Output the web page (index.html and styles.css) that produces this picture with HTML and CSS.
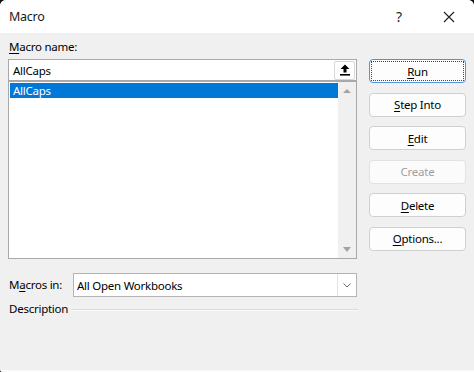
FILE: index.html
```html
<!DOCTYPE html>
<html lang="en">
<head>
    <meta charset="UTF-8">
    <title>Macro</title>
    <link rel="stylesheet" href="styles.css">
</head>
<body>
    <div class="window">
        <div class="titlebar">
            <span class="title">Macro</span>
            <span class="help">?</span>
            <span class="close">
                <svg width="12" height="12" viewBox="0 0 12 12"><path d="M1 1L11 11M11 1L1 11" stroke="#1f1f1f" stroke-width="1.1" fill="none"/></svg>
            </span>
        </div>

        <div class="content">
            <div class="top">
                <div class="left">
                    <div class="label"><u>M</u>acro name:</div>
                    <div class="namebox">
                        <span class="name-text">AllCaps</span>
                        <span class="upload">
                            <svg width="10" height="12" viewBox="0 0 10 12"><path d="M5 0.5L9.5 5H6.5V8.5H3.5V5H0.5Z" fill="#000"/><rect x="0" y="10" width="10" height="1.6" fill="#000"/></svg>
                        </span>
                    </div>
                    <div class="list">
                        <div class="items">
                            <div class="item selected">AllCaps</div>
                        </div>
                        <div class="scrollbar">
                            <span class="arrow-up"></span>
                            <span class="arrow-down"></span>
                        </div>
                    </div>
                </div>

                <div class="buttons">
                    <div class="btn default"><span class="focus"><u>R</u>un</span></div>
                    <div class="btn"><u>S</u>tep Into</div>
                    <div class="btn"><u>E</u>dit</div>
                    <div class="btn disabled">Create</div>
                    <div class="btn"><u>D</u>elete</div>
                    <div class="btn"><u>O</u>ptions...</div>
                </div>
            </div>

            <div class="macros-in">
                <span class="label">M<u>a</u>cros in:</span>
                <div class="select">
                    <span class="select-text">All Open Workbooks</span>
                    <span class="drop">
                        <svg width="8" height="5" viewBox="0 0 8 5"><path d="M0.5 0.5L4 4L7.5 0.5" stroke="#6b6b6b" stroke-width="1" fill="none"/></svg>
                    </span>
                </div>
            </div>

            <div class="desc">
                <span>Description</span>
                <span class="rule"></span>
            </div>
        </div>
    </div>
</body>
</html>
```

FILE: styles.css
```css
body {
    margin: 0;
    width: 474px;
    height: 372px;
    background: #111;
    font-family: "Noto Sans", sans-serif;
    font-size: 11.5px;
    letter-spacing: -0.25px;
    color: #000;
    overflow: hidden;
}
u {
    text-underline-offset: 2px;
}
.window {
    width: 474px;
    height: 372px;
    border-radius: 6px 6px 0 3px;
    overflow: hidden;
    background: #f0f0f0;
}
.titlebar {
    height: 33px;
    background: #fff;
    display: flex;
    align-items: center;
}
.title {
    flex: 1;
    padding-left: 9px;
    font-size: 12.5px;
    color: #1a1a1a;
}
.help, .close {
    width: 46px;
    display: flex;
    justify-content: center;
    align-items: center;
    font-size: 14px;
    color: #1f1f1f;
}
.close {
    margin-left: 4px;
    margin-right: 2px;
}
.content {
    height: 339px;
    box-sizing: border-box;
    padding: 6px 8px 0 8px;
    box-shadow: inset 0 -2px #fbfbfb;
}
.top {
    display: flex;
}
.left {
    width: 349px;
}
.label {
    line-height: 16px;
    padding-left: 1px;
}
.left .label {
    margin-bottom: 4px;
}
.namebox {
    height: 22px;
    box-sizing: border-box;
    border: 1px solid #a9a9a9;
    background: #fff;
    display: flex;
    align-items: center;
}
.name-text {
    flex: 1;
    padding-left: 4px;
}
.upload {
    width: 21px;
    height: 19px;
    box-sizing: border-box;
    margin-right: 1px;
    border: 1px solid #d6d6d6;
    border-radius: 2px;
    display: flex;
    justify-content: center;
    align-items: center;
}
.list {
    height: 178px;
    box-sizing: border-box;
    border: 1px solid #a9a9a9;
    background: #fff;
    padding: 1px 0 0 1px;
    display: flex;
}
.items {
    flex: 1;
}
.item {
    height: 15px;
    line-height: 15px;
    padding-left: 3px;
}
.item.selected {
    background: #0078d7;
    color: #fff;
}
.scrollbar {
    width: 18px;
    margin-top: -1px;
    background: #f0f0f0;
    display: flex;
    flex-direction: column;
    justify-content: space-between;
    align-items: center;
    padding: 7px 0 6px 0;
}
.arrow-up {
    width: 0;
    height: 0;
    border-left: 4px solid transparent;
    border-right: 4px solid transparent;
    border-bottom: 4px solid #a3a3a3;
}
.arrow-down {
    width: 0;
    height: 0;
    border-left: 4px solid transparent;
    border-right: 4px solid transparent;
    border-top: 5px solid #a3a3a3;
}
.buttons {
    margin-left: 12px;
    width: 97px;
    padding-top: 20px;
    display: flex;
    flex-direction: column;
    gap: 9.6px;
}
.btn {
    height: 24px;
    box-sizing: border-box;
    border: 1px solid #d0d0d0;
    border-radius: 4px;
    background: #fdfdfd;
    display: flex;
    justify-content: center;
    align-items: center;
}
.btn.default {
    border-color: #4c94dc;
    align-items: stretch;
}
.btn .focus {
    flex: 1;
    margin: 1px;
    border: 1px dotted #444;
    display: flex;
    justify-content: center;
    align-items: center;
}
.btn.disabled {
    color: #a0a0a0;
    border-color: #e2e2e2;
    background: #fbfbfb;
}
.macros-in {
    margin-top: 14px;
    display: flex;
    align-items: center;
}
.macros-in .label {
    width: 64px;
}
.select {
    width: 284px;
    height: 24px;
    box-sizing: border-box;
    border: 1px solid #b4b4b4;
    background: #fff;
    display: flex;
    align-items: stretch;
}
.select-text {
    flex: 1;
    padding-left: 3px;
    display: flex;
    align-items: center;
}
.drop {
    width: 18px;
    border-left: 1px solid #e3e3e3;
    display: flex;
    justify-content: center;
    align-items: center;
}
.desc {
    margin-top: 4px;
    display: flex;
    align-items: center;
    width: 349px;
    line-height: 16px;
    padding-left: 1px;
}
.rule {
    flex: 1;
    height: 1px;
    margin-left: 3px;
    background: #dadada;
    box-shadow: 0 1px #fafafa;
}
```
